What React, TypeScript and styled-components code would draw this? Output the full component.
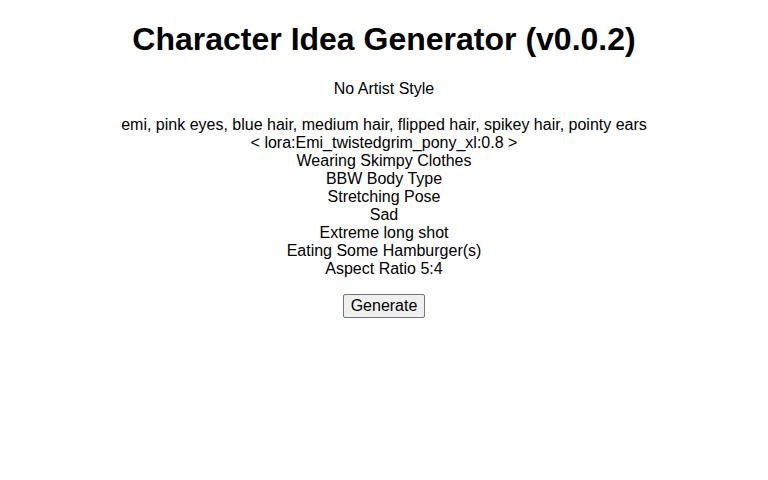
import React from 'react';
import styled, { createGlobalStyle } from 'styled-components';

const GlobalStyle = createGlobalStyle`
  body {
    margin: 0 8px 8px;
    background: #ffffff;
    color: #000000;
    font-family: "Liberation Sans", Arial, sans-serif;
  }
`;

const Page = styled.div`
  display: block;
  text-align: center;
`;

const Title = styled.h1`
  font-size: 32px;
  font-weight: bold;
  margin: 21.44px 0;
`;

const Prompt = styled.p`
  font-size: 16px;
  line-height: 18px;
  margin: 16px 0;
`;

const Gap = styled.span`
  display: block;
  height: 18px;
`;

const GenerateBtn = styled.button`
  font-family: "Liberation Sans", Arial, sans-serif;
  font-size: 16px;
  color: #000000;
  background-color: #efefef;
  border: 1px solid #767676;
  border-radius: 2px;
  padding: 2px 7px;
  cursor: pointer;
  &:hover {
    background-color: #e5e5e5;
  }
`;

const traits = [
  'emi, pink eyes, blue hair, medium hair, flipped hair, spikey hair, pointy ears',
  '< lora:Emi_twistedgrim_pony_xl:0.8 >',
  'Wearing Skimpy Clothes',
  'BBW Body Type',
  'Stretching Pose',
  'Sad',
  'Extreme long shot',
  'Eating Some Hamburger(s)',
  'Aspect Ratio 5:4',
];

const App = () => {
  return (
    <>
      <GlobalStyle />
      <Page>
        <Title>Character Idea Generator (v0.0.2)</Title>
        <Prompt>
          No Artist Style
          <Gap />
          {traits.map((t, i) => (
            <React.Fragment key={i}>
              {t}
              {i < traits.length - 1 && <br />}
            </React.Fragment>
          ))}
        </Prompt>
        <GenerateBtn>Generate</GenerateBtn>
      </Page>
    </>
  );
};

export default App;
